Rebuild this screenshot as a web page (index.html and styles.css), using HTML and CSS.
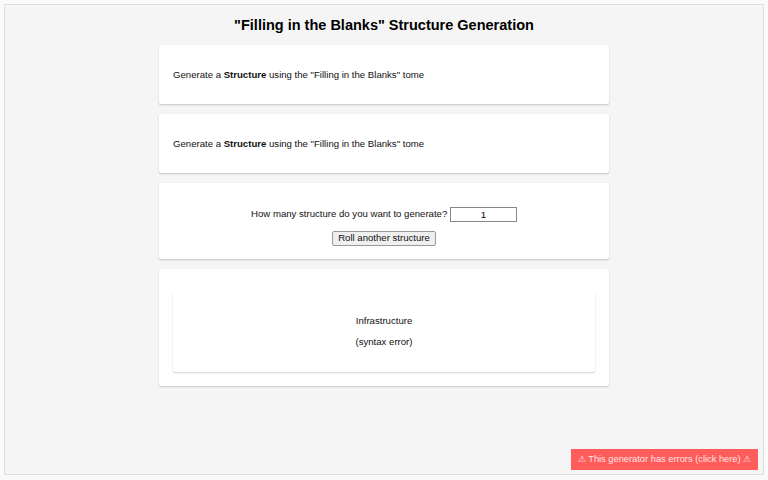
FILE: index.html
```html
<!DOCTYPE html>
<html>
<head>
<meta charset="utf-8">
<link rel="stylesheet" href="styles.css">
</head>
<body>
<div class="frame">
  <h1 class="title">"Filling in the Blanks" Structure Generation</h1>
  <div class="cards">
    <div class="card card-text">Generate a <b>Structure</b> using the "Filling in the Blanks" tome</div>
    <div class="card card-text">Generate a <b>Structure</b> using the "Filling in the Blanks" tome</div>
    <div class="card card-form">
      <div class="row">How many structure do you want to generate? <input class="num" type="text" value="1"></div>
      <div class="row"><button class="btn">Roll another structure</button></div>
    </div>
    <div class="card card-output">
      <div class="inner">
        <p class="line">Infrastructure</p>
        <p class="line">(syntax error)</p>
      </div>
    </div>
  </div>
</div>
<div class="errors">⚠&#xFE0E; This generator has errors (click here) ⚠&#xFE0E;</div>
</body>
</html>
```
FILE: styles.css
```css
html, body {
  margin: 0;
  padding: 0;
  background: #fafafa;
  font-family: "Liberation Sans", Arial, sans-serif;
  color: #111;
}
.frame {
  margin: 4px;
  border: 1px solid #dedede;
  background: #f5f5f5;
  box-sizing: border-box;
  height: 471px;
}
.title {
  margin: 12px 0 0 0;
  font-size: 14.5px;
  line-height: 17px;
  text-align: center;
  font-weight: bold;
  color: #000;
}
.cards {
  width: 450px;
  margin: 11px auto 0 auto;
  display: flex;
  flex-direction: column;
  gap: 10px;
}
.card {
  background: #fff;
  box-shadow: 0 1px 2px rgba(0,0,0,0.2);
  border-radius: 2px;
  font-size: 9.6px;
}
.card-text {
  padding: 23px 14px;
  line-height: 13px;
}
.card-form {
  padding: 23px 14px 13px 14px;
  text-align: center;
}
.row {
  line-height: 16px;
}
.row + .row {
  margin-top: 8px;
}
.num {
  width: 67px;
  height: 15px;
  box-sizing: border-box;
  border: 1px solid #888;
  font-family: "Liberation Sans", Arial, sans-serif;
  font-size: 9.6px;
  text-align: center;
  padding: 0;
  margin: 0;
  vertical-align: middle;
}
.btn {
  font-family: "Liberation Sans", Arial, sans-serif;
  font-size: 9.6px;
  height: 15px;
  line-height: 12px;
  padding: 0 5px;
  border: 1px solid #999;
  border-radius: 2px;
  background: #efefef;
  color: #111;
}
.card-output {
  padding: 23px 14px 14px 14px;
}
.inner {
  height: 80px;
  box-sizing: border-box;
  padding-top: 22px;
  text-align: center;
  background: #fff;
  box-shadow: 0 1px 2px rgba(0,0,0,0.18);
  border-radius: 2px;
}
.line {
  margin: 0;
  line-height: 14px;
}
.line + .line {
  margin-top: 7px;
}
.errors {
  position: fixed;
  right: 10px;
  bottom: 10px;
  width: 187px;
  height: 21px;
  line-height: 21px;
  text-align: center;
  background: #ff5c5c;
  color: #ffe4e4;
  font-size: 9.3px;
  white-space: nowrap;
}
```
